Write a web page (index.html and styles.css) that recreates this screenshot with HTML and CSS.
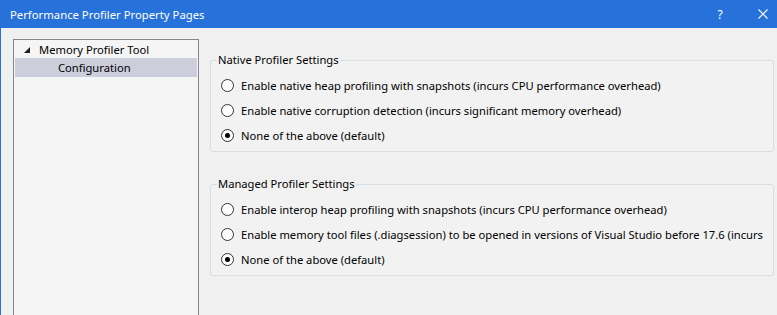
FILE: index.html
```html
<!DOCTYPE html>
<html lang="en">
<head>
    <meta charset="UTF-8">
    <title>Performance Profiler Property Pages</title>
    <link rel="stylesheet" href="styles.css">
</head>
<body>

    <div class="titlebar">
        <span class="title">Performance Profiler Property Pages</span>
        <span class="help">?</span>
        <span class="close">
            <svg width="10" height="10" viewBox="0 0 10 10">
                <path d="M0.5 0.5 L9.5 9.5 M9.5 0.5 L0.5 9.5" stroke="#fff" stroke-width="1.1" fill="none"/>
            </svg>
        </span>
    </div>

    <div class="content">
        <div class="tree">
            <div class="tree-item">
                <span class="arrow"></span>
                <span>Memory Profiler Tool</span>
            </div>
            <div class="tree-item child selected">Configuration</div>
        </div>

        <div class="pages">
            <fieldset class="group">
                <legend>Native Profiler Settings</legend>
                <div class="option"><span class="radio"></span>Enable native heap profiling with snapshots (incurs CPU performance overhead)</div>
                <div class="option"><span class="radio"></span>Enable native corruption detection (incurs significant memory overhead)</div>
                <div class="option"><span class="radio checked"></span>None of the above (default)</div>
            </fieldset>

            <fieldset class="group">
                <legend>Managed Profiler Settings</legend>
                <div class="option"><span class="radio"></span>Enable interop heap profiling with snapshots (incurs CPU performance overhead)</div>
                <div class="option"><span class="radio"></span>Enable memory tool files (.diagsession) to be opened in versions of Visual Studio before 17.6 (incurs</div>
                <div class="option"><span class="radio checked"></span>None of the above (default)</div>
            </fieldset>
        </div>
    </div>

</body>
</html>
```

FILE: styles.css
```css
html, body {
    margin: 0;
}

body {
    width: 777px;
    height: 315px;
    overflow: hidden;
    font-family: 'Noto Sans', 'Open Sans', sans-serif;
    font-size: 11.2px;
    color: #000;
    background: #f0f0f0;
    border-left: 1px solid #2b6fd6;
    box-sizing: border-box;
    display: flex;
    flex-direction: column;
}

.titlebar {
    height: 28px;
    flex: none;
    background: #2771db;
    color: #fff;
    display: flex;
    align-items: center;
    padding-left: 9px;
    font-size: 11.3px;
}

.title {
    flex: 1;
}

.help {
    width: 14px;
    text-align: center;
    margin-right: 31px;
    font-size: 12px;
}

.close {
    display: flex;
    margin-right: 9px;
}

.content {
    flex: 1;
    min-height: 0;
    display: flex;
    padding: 11px 0 0 12px;
}

.tree {
    width: 186px;
    border: 1px solid #828790;
    border-bottom: none;
    background: #f5f5f5;
    padding: 0 1px;
    box-sizing: border-box;
    flex: none;
}

.tree-item {
    height: 18px;
    display: flex;
    align-items: center;
    padding-left: 9px;
}

.tree-item.child {
    height: 19px;
    padding-left: 43px;
}

.tree-item.selected {
    background: #cccedb;
}

.arrow {
    width: 0;
    height: 0;
    border-left: 6px solid transparent;
    border-bottom: 6px solid #1e1e1e;
    margin-right: 9px;
    margin-top: 1px;
}

.pages {
    margin-left: 11px;
    width: 564px;
    display: flex;
    flex-direction: column;
    gap: 24px;
    padding-top: 13px;
}

.group {
    margin: 0;
    padding: 5px 0 3px 6px;
    border: 1px solid #d5dfe5;
    border-radius: 3px;
    background: #f2f2f2;
    min-width: 0;
}

.group legend {
    padding: 0 1px;
    line-height: 16px;
}

.option {
    height: 25px;
    display: flex;
    align-items: center;
    margin-left: 4px;
    white-space: nowrap;
    overflow: hidden;
}

.radio {
    width: 13px;
    height: 13px;
    border: 1px solid #333;
    border-radius: 50%;
    background: #fff;
    box-sizing: border-box;
    margin-right: 7px;
    flex: none;
    display: flex;
    align-items: center;
    justify-content: center;
}

.radio.checked::after {
    content: '';
    width: 5px;
    height: 5px;
    border-radius: 50%;
    background: #000;
}
```
